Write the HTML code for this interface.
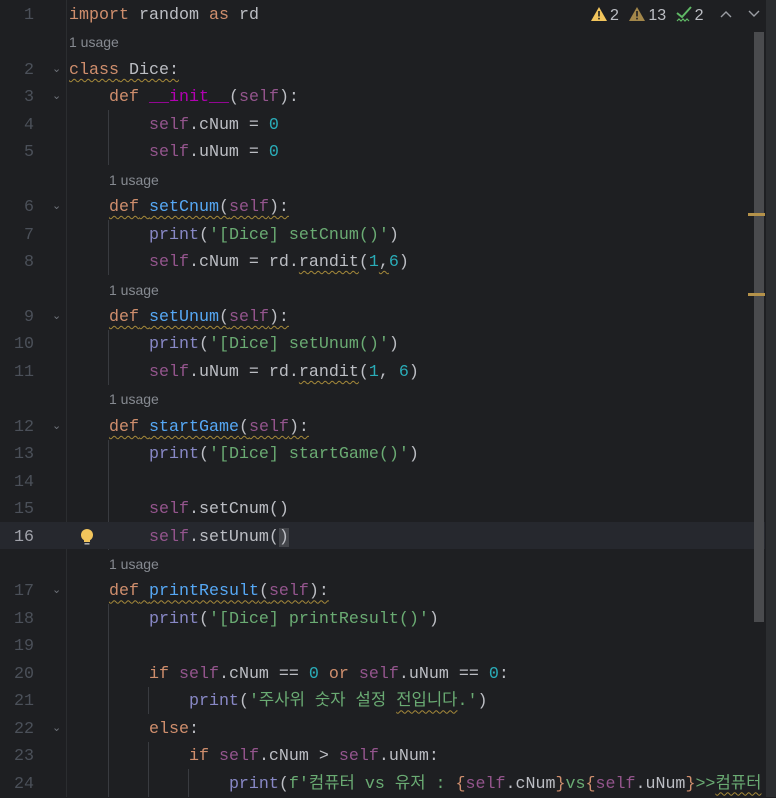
<!DOCTYPE html>
<html><head><meta charset="utf-8"><style>
html,body{margin:0;padding:0;background:#1e1f22;width:776px;height:797px;overflow:hidden}
.r{position:absolute;left:0;width:765px;height:27.45px;line-height:27.45px;font-family:"Liberation Mono","Noto Sans CJK KR",monospace;font-size:16.67px;color:#bcbec4;white-space:pre}
.r>span{top:2px}
.n,.c,.f{position:absolute}
.cur{background:#26282e}
.n{left:0;width:34px;text-align:right;color:#4b5059}
.cur .n{color:#a1a3ab}
.c{left:69px;width:696px;overflow:hidden}
.u{font-family:"Liberation Sans",sans-serif;font-size:14px;color:#868a91}
.f{left:52px;color:#6f737a;font-size:11px}
.k{color:#cf8e6d}.s{color:#94558d}.fn{color:#56a8f5}.num{color:#2aacb8}.st{color:#6aab73}.d{color:#b200b2}.b{color:#8888c6}
.w{text-decoration:underline wavy #a68a3a;text-decoration-thickness:1px;text-underline-offset:4px}
.gut{position:absolute;left:66px;top:0;width:1px;height:797px;background:#2b2d30}
.g{position:absolute;width:1px;background:#393b40}
</style></head><body>
<div class="gut"></div>
<div class="g" style="left:108px;top:110px;height:55px"></div>
<div class="g" style="left:108px;top:220px;height:55px"></div>
<div class="g" style="left:108px;top:330px;height:55px"></div>
<div class="g" style="left:108px;top:440px;height:110px"></div>
<div class="g" style="left:108px;top:604px;height:193px"></div>
<div class="g" style="left:148px;top:687px;height:27px"></div>
<div class="g" style="left:148px;top:742px;height:55px"></div>
<div class="g" style="left:188px;top:769px;height:28px"></div>

<div class="r" style="top:0"><span class="n">1</span><span class="c"><span class="k">import</span> random <span class="k">as</span> rd</span></div>
<div class="r" style="top:27.45px"><span class="c u">1 usage</span></div>
<div class="r" style="top:54.9px"><span class="n">2</span><span class="f">⌄</span><span class="c"><span class="w"><span class="k">class</span> Dice:</span></span></div>
<div class="r" style="top:82.35px"><span class="n">3</span><span class="f">⌄</span><span class="c">    <span class="k">def</span> <span class="d">__init__</span>(<span class="s">self</span>):</span></div>
<div class="r" style="top:109.8px"><span class="n">4</span><span class="c">        <span class="s">self</span>.cNum = <span class="num">0</span></span></div>
<div class="r" style="top:137.25px"><span class="n">5</span><span class="c">        <span class="s">self</span>.uNum = <span class="num">0</span></span></div>
<div class="r" style="top:164.7px"><span class="c u" style="left:109px">1 usage</span></div>
<div class="r" style="top:192.15px"><span class="n">6</span><span class="f">⌄</span><span class="c">    <span class="w"><span class="k">def</span> <span class="fn">setCnum</span>(<span class="s">self</span>):</span></span></div>
<div class="r" style="top:219.6px"><span class="n">7</span><span class="c">        <span class="b">print</span>(<span class="st">'[Dice] setCnum()'</span>)</span></div>
<div class="r" style="top:247.05px"><span class="n">8</span><span class="c">        <span class="s">self</span>.cNum = rd.<span class="w">randit</span>(<span class="num">1</span><span class="w">,</span><span class="num">6</span>)</span></div>
<div class="r" style="top:274.5px"><span class="c u" style="left:109px">1 usage</span></div>
<div class="r" style="top:301.95px"><span class="n">9</span><span class="f">⌄</span><span class="c">    <span class="w"><span class="k">def</span> <span class="fn">setUnum</span>(<span class="s">self</span>):</span></span></div>
<div class="r" style="top:329.4px"><span class="n">10</span><span class="c">        <span class="b">print</span>(<span class="st">'[Dice] setUnum()'</span>)</span></div>
<div class="r" style="top:356.85px"><span class="n">11</span><span class="c">        <span class="s">self</span>.uNum = rd.<span class="w">randit</span>(<span class="num">1</span>, <span class="num">6</span>)</span></div>
<div class="r" style="top:384.3px"><span class="c u" style="left:109px">1 usage</span></div>
<div class="r" style="top:411.75px"><span class="n">12</span><span class="f">⌄</span><span class="c">    <span class="w"><span class="k">def</span> <span class="fn">startGame</span>(<span class="s">self</span>):</span></span></div>
<div class="r" style="top:439.2px"><span class="n">13</span><span class="c">        <span class="b">print</span>(<span class="st">'[Dice] startGame()'</span>)</span></div>
<div class="r" style="top:466.65px"><span class="n">14</span></div>
<div class="r" style="top:494.1px"><span class="n">15</span><span class="c">        <span class="s">self</span>.setCnum()</span></div>
<div class="r cur" style="top:521.55px"><span class="n">16</span><svg style="position:absolute;left:79px;top:6px" width="16" height="18" viewBox="0 0 16 18"><circle cx="8" cy="7" r="6" fill="#f2c55c"/><rect x="5" y="11" width="6" height="3" fill="#f2c55c"/><rect x="5.5" y="15" width="5" height="1.6" fill="#aaa"/></svg><span class="c">        <span class="s">self</span>.setUnum(<span style="background:#43454a">)</span></span></div>
<div class="r" style="top:549px"><span class="c u" style="left:109px">1 usage</span></div>
<div class="r" style="top:576.45px"><span class="n">17</span><span class="f">⌄</span><span class="c">    <span class="w"><span class="k">def</span> <span class="fn">printResult</span>(<span class="s">self</span>):</span></span></div>
<div class="r" style="top:603.9px"><span class="n">18</span><span class="c">        <span class="b">print</span>(<span class="st">'[Dice] printResult()'</span>)</span></div>
<div class="r" style="top:631.35px"><span class="n">19</span></div>
<div class="r" style="top:658.8px"><span class="n">20</span><span class="c">        <span class="k">if</span> <span class="s">self</span>.cNum == <span class="num">0</span> <span class="k">or</span> <span class="s">self</span>.uNum == <span class="num">0</span>:</span></div>
<div class="r" style="top:686.25px"><span class="n">21</span><span class="c">            <span class="b">print</span>(<span class="st">'주사위 숫자 설정 <span class="w">전입니다</span>.'</span>)</span></div>
<div class="r" style="top:713.7px"><span class="n">22</span><span class="f">⌄</span><span class="c">        <span class="k">else</span>:</span></div>
<div class="r" style="top:741.15px"><span class="n">23</span><span class="c">            <span class="k">if</span> <span class="s">self</span>.cNum &gt; <span class="s">self</span>.uNum:</span></div>
<div class="r" style="top:768.6px"><span class="n">24</span><span class="c">                <span class="b">print</span>(<span class="st">f'컴퓨터 vs 유저 : </span><span class="k">{</span><span class="s">self</span>.cNum<span class="k">}</span><span class="st">vs</span><span class="k">{</span><span class="s">self</span>.uNum<span class="k">}</span><span class="st">&gt;&gt;<span class="w">컴퓨터</span></span></span></div>

<div style="position:absolute;left:591px;top:6px;height:20px;font-family:'Liberation Sans',sans-serif;font-size:16px;color:#bcbec4;line-height:20px;white-space:nowrap">
<svg width="16" height="14" viewBox="0 0 16 14" style="vertical-align:-1px"><path d="M8 0 L16 14 L0 14 Z" fill="#f2c55c"/><rect x="7.2" y="4" width="1.6" height="5.5" fill="#1e1f22"/><rect x="7.2" y="10.8" width="1.6" height="1.6" fill="#1e1f22"/></svg><span style="margin-left:3px">2</span>
<svg width="16" height="14" viewBox="0 0 16 14" style="vertical-align:-1px;margin-left:6px"><path d="M8 0 L16 14 L0 14 Z" fill="#a3874a"/><rect x="7.2" y="4" width="1.6" height="5.5" fill="#1e1f22"/><rect x="7.2" y="10.8" width="1.6" height="1.6" fill="#1e1f22"/></svg><span style="margin-left:3px">13</span>
<svg width="16" height="16" viewBox="0 0 16 16" style="vertical-align:-2px;margin-left:5px"><path d="M1 7 L6 11 L15 1" stroke="#5fb865" stroke-width="2" fill="none"/><path d="M1 15 l2 -2 l2 2 l2 -2 l2 2 l2 -2 l2 2" stroke="#5fb865" stroke-width="1.2" fill="none"/></svg><span style="margin-left:3px">2</span>
<svg width="12" height="8" viewBox="0 0 12 8" style="margin-left:12px;vertical-align:2px"><path d="M1 7 L6 2 L11 7" stroke="#9a9da3" stroke-width="1.4" fill="none"/></svg>
<svg width="12" height="8" viewBox="0 0 12 8" style="margin-left:12px;vertical-align:2px"><path d="M1 1 L6 6 L11 1" stroke="#9a9da3" stroke-width="1.4" fill="none"/></svg>
</div>

<div style="position:absolute;left:766px;top:0;width:10px;height:797px;background:#2b2d30"></div>
<div style="position:absolute;left:754px;top:32px;width:10px;height:590px;background:#4a4b4e"></div>
<div style="position:absolute;left:748px;top:213px;width:17px;height:3px;background:#b5924a"></div>
<div style="position:absolute;left:748px;top:293px;width:17px;height:3px;background:#b5924a"></div>
</body></html>
